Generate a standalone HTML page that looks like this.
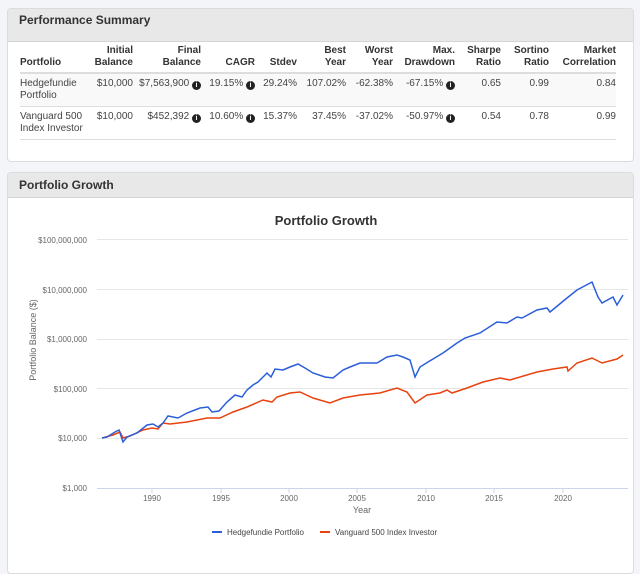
<!DOCTYPE html>
<html><head><meta charset="utf-8"><style>
body{margin:0;background:#f4f5f8;font-family:"Liberation Sans",Arial,sans-serif;color:#333;width:640px;height:545px;overflow:hidden;position:relative}
.panel{position:absolute;left:7px;width:625px;background:#fff;border:1px solid #dcdcdc;border-radius:4px;overflow:hidden}
.hd{background:#e8e8e8;border-bottom:1px solid #d4d4d4;font-weight:bold;font-size:12px;padding-left:11px;box-sizing:border-box}
table{position:absolute;left:12px;top:36px;width:596px;border-collapse:collapse;font-size:10px;table-layout:fixed}
th{font-weight:bold;text-align:right;vertical-align:bottom;padding:0 0 3px 0;line-height:12px;border-bottom:2px solid #ddd}
td{text-align:right;vertical-align:top;padding:4px 0 4px 0;line-height:12px;border-bottom:1px solid #ddd;color:#444;white-space:nowrap}
th:first-child,td:first-child{text-align:left}
tr.a td{background:#f9f9f9}
.i{display:inline-block;width:9px;height:9px;border-radius:50%;background:#222;color:#fff;font-size:7px;line-height:9px;text-align:center;font-weight:bold;vertical-align:-1px}
</style></head><body>
<div class="panel" style="top:8px;height:152px">
<div class="hd" style="height:33px;line-height:23px">Performance Summary</div>
<table>
<colgroup><col style="width:65px"><col style="width:48px"><col style="width:68px"><col style="width:54px"><col style="width:42px"><col style="width:49px"><col style="width:47px"><col style="width:62px"><col style="width:46px"><col style="width:48px"><col style="width:67px"></colgroup>
<tr><th>Portfolio</th><th>Initial<br>Balance</th><th>Final<br>Balance</th><th>CAGR</th><th>Stdev</th><th>Best<br>Year</th><th>Worst<br>Year</th><th>Max.<br>Drawdown</th><th>Sharpe<br>Ratio</th><th>Sortino<br>Ratio</th><th>Market<br>Correlation</th></tr>
<tr class="a"><td>Hedgefundie<br>Portfolio</td><td>$10,000</td><td>$7,563,900 <span class="i">i</span></td><td>19.15% <span class="i">i</span></td><td>29.24%</td><td>107.02%</td><td>-62.38%</td><td>-67.15% <span class="i">i</span></td><td>0.65</td><td>0.99</td><td>0.84</td></tr>
<tr><td>Vanguard 500<br>Index Investor</td><td>$10,000</td><td>$452,392 <span class="i">i</span></td><td>10.60% <span class="i">i</span></td><td>15.37%</td><td>37.45%</td><td>-37.02%</td><td>-50.97% <span class="i">i</span></td><td>0.54</td><td>0.78</td><td>0.99</td></tr>
</table>
</div>
<div class="panel" style="top:172px;height:400px">
<div class="hd" style="height:25px;line-height:25px">Portfolio Growth</div>
</div>
<svg style="position:absolute;left:0;top:0" width="640" height="545" font-family="Liberation Sans,Arial,sans-serif">
<text x="326" y="225" text-anchor="middle" font-size="13" font-weight="bold" fill="#333">Portfolio Growth</text>
<g stroke="#e6e6e6" stroke-width="1">
<line x1="97" x2="628" y1="239.5" y2="239.5"/><line x1="97" x2="628" y1="289.5" y2="289.5"/><line x1="97" x2="628" y1="339.5" y2="339.5"/><line x1="97" x2="628" y1="388.5" y2="388.5"/><line x1="97" x2="628" y1="438.5" y2="438.5"/>
</g>
<line x1="97" x2="628" y1="488.5" y2="488.5" stroke="#ccd6eb"/>
<g stroke="#ccd6eb"><line x1="152" x2="152" y1="488" y2="493"/><line x1="221" x2="221" y1="488" y2="493"/><line x1="289" x2="289" y1="488" y2="493"/><line x1="357" x2="357" y1="488" y2="493"/><line x1="426" x2="426" y1="488" y2="493"/><line x1="494" x2="494" y1="488" y2="493"/><line x1="563" x2="563" y1="488" y2="493"/></g>
<g font-size="8" fill="#666" text-anchor="end">
<text x="87" y="243">$100,000,000</text><text x="87" y="293">$10,000,000</text><text x="87" y="342">$1,000,000</text><text x="87" y="392">$100,000</text><text x="87" y="441">$10,000</text><text x="87" y="491">$1,000</text>
</g>
<g font-size="8" fill="#666" text-anchor="middle">
<text x="152" y="501">1990</text><text x="221" y="501">1995</text><text x="289" y="501">2000</text><text x="357" y="501">2005</text><text x="426" y="501">2010</text><text x="494" y="501">2015</text><text x="563" y="501">2020</text>
<text x="362" y="513" font-size="9">Year</text>
</g>
<text transform="translate(36,340) rotate(-90)" font-size="9" fill="#666" text-anchor="middle">Portfolio Balance ($)</text>
<polyline fill="none" stroke="#e8420f" stroke-width="1.5" points="102,438 113,435 120,432 123,438 130,436 143,430 152,428 158,429 163,423 170,424 187,422 207,418 220,418 233,412 247,407 263,400 272,402 277,397 290,393 300,392 313,398 330,403 343,398 360,395 380,393 397,388 407,392 415,403 427,395 440,393 447,390 452,393 467,388 483,382 500,378 510,380 537,372 553,369 567,367 568,371 577,363 592,358 602,363 617,359 623,355"/>
<polyline fill="none" stroke="#2b5fd9" stroke-width="1.5" points="102,438 107,437 115,432 119,430 123,442 127,437 137,433 147,425 153,424 158,427 163,423 168,416 178,418 187,413 200,408 208,407 212,412 219,411 227,402 235,395 242,397 247,390 253,385 258,382 267,373 271,377 275,369 283,370 290,367 298,364 305,368 313,373 325,377 333,378 343,370 350,367 360,363 377,363 387,357 397,355 403,357 410,360 415,377 420,367 428,362 443,353 457,343 465,338 480,333 497,322 507,323 517,317 522,318 537,310 547,308 550,312 567,298 577,290 592,282 598,297 602,303 613,297 617,305 623,295"/>
<line x1="212" x2="222" y1="532" y2="532" stroke="#2b5fd9" stroke-width="2"/>
<text x="227" y="535" font-size="8" fill="#444">Hedgefundie Portfolio</text>
<line x1="320" x2="330" y1="532" y2="532" stroke="#e8420f" stroke-width="2"/>
<text x="335" y="535" font-size="8" fill="#444">Vanguard 500 Index Investor</text>
</svg>
</body></html>
